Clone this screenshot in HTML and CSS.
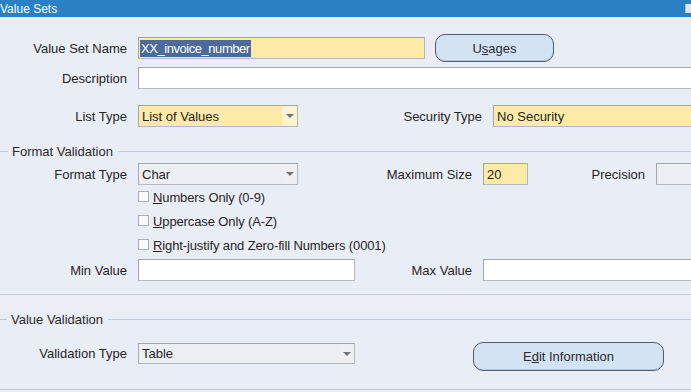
FILE: index.html
```html
<!DOCTYPE html>
<html>
<head>
<meta charset="utf-8">
<link rel="stylesheet" href="styles.css">
</head>
<body>
<div class="window">
  <div class="titlebar">
    <span class="title">Value Sets</span>
    <span class="title-icon"></span>
  </div>

  <div class="row row1">
    <label class="lbl w-main">Value Set Name</label>
    <div class="field yellow w-name"><span class="sel">XX_invoice_number</span></div>
    <button class="btn btn-usages">U<u>s</u>ages</button>
  </div>

  <div class="row row2">
    <label class="lbl w-main">Description</label>
    <div class="field white w-desc"></div>
  </div>

  <div class="row row3">
    <label class="lbl w-main">List Type</label>
    <div class="field yellow select w-160"><span class="val">List of Values</span><span class="drop"><span class="arrow"></span></span></div>
    <label class="lbl w-sec">Security Type</label>
    <div class="field yellow w-rest"><span class="val">No Security</span></div>
  </div>

  <div class="group group-format">
    <div class="legend"><span class="lline"></span><span class="ltext">Format Validation</span><span class="rline"></span></div>

    <div class="row row-ft">
      <label class="lbl w-main">Format Type</label>
      <div class="field grey select w-160"><span class="val">Char</span><span class="drop"><span class="arrow"></span></span></div>
      <label class="lbl w-max">Maximum Size</label>
      <div class="field yellow w-size"><span class="val">20</span></div>
      <label class="lbl w-prec">Precision</label>
      <div class="field grey w-rest"></div>
    </div>

    <div class="checks">
      <div class="check"><span class="box"></span><span><u>N</u>umbers Only (0-9)</span></div>
      <div class="check"><span class="box"></span><span><u>U</u>ppercase Only (A-Z)</span></div>
      <div class="check"><span class="box"></span><span><u>R</u>ight-justify and Zero-fill Numbers (0001)</span></div>
    </div>

    <div class="row row-min">
      <label class="lbl w-main">Min Value</label>
      <div class="field white w-217"></div>
      <label class="lbl w-maxv">Max Value</label>
      <div class="field white w-rest"></div>
    </div>
  </div>

  <div class="gap-band"></div>

  <div class="group group-value">
    <div class="legend"><span class="lline lline-v"></span><span class="ltext">Value Validation</span><span class="rline"></span></div>
    <div class="row row-vt">
      <label class="lbl w-main">Validation Type</label>
      <div class="field grey select w-217"><span class="val">Table</span><span class="drop"><span class="arrow"></span></span></div>
      <button class="btn btn-edit">E<u>d</u>it Information</button>
    </div>
  </div>
</div>
</body>
</html>
```

FILE: styles.css
```css
html, body {
  margin: 0;
  padding: 0;
  background: #e9edf5;
  overflow: hidden;
}
body {
  width: 691px;
  height: 392px;
  font-family: "Liberation Sans", Arial, sans-serif;
  font-size: 13px;
  color: #262626;
}
.window {
  width: 691px;
  height: 392px;
  overflow: hidden;
}
.titlebar {
  height: 17px;
  background: #2b80c4;
  display: flex;
  align-items: center;
  justify-content: space-between;
}
.title {
  color: #ffffff;
  font-size: 12px;
  line-height: 17px;
  padding-top: 1px;
}
.title-icon {
  width: 5px;
  height: 9px;
  background: #dfe8f2;
  border-left: 1px solid #9fc0e0;
  margin-bottom: 1px;
}
.row {
  display: flex;
  align-items: center;
  white-space: nowrap;
}
.lbl {
  text-align: right;
  flex: none;
  margin-right: 11px;
}
.w-main { width: 127px; }
.w-sec { width: 184px; }
.w-max { width: 174px; }
.w-prec { width: 117px; }
.w-maxv { width: 117px; }

.field {
  flex: none;
  box-sizing: border-box;
  height: 22px;
  border: 1px solid #b4b8bf;
  border-top-color: #a2a6ad;
  border-left-color: #a2a6ad;
  display: flex;
  align-items: center;
  padding-left: 3px;
  position: relative;
}
.yellow { background: #fdeaa6; }
.white { background: #ffffff; }
.grey { background: #eceff3; }
.w-name { width: 287px; height: 22px; padding-left: 1px; }
.w-desc { width: 580px; }
.w-160 { width: 160px; }
.w-217 { width: 217px; }
.w-size { width: 45px; }
.w-rest { width: 240px; }

.sel {
  background: #4d6a9c;
  color: #ffffff;
  line-height: 17px;
  padding: 0 1px;
  letter-spacing: -0.45px;
}
.val { flex: 1; }
.select .drop {
  width: 15px;
  align-self: stretch;
  display: flex;
  align-items: center;
  justify-content: center;
}
.yellow .drop { background: #fdf3d2; }
.grey .drop { background: #eef0f4; }
.arrow {
  width: 0;
  height: 0;
  border-left: 4px solid transparent;
  border-right: 4px solid transparent;
  border-top: 4px solid #6f737a;
}

.btn {
  flex: none;
  font-family: "Liberation Sans", Arial, sans-serif;
  font-size: 13px;
  color: #2b2b2b;
  background: #d4e3f4;
  border: 1px solid #4f5d72;
  border-radius: 10px;
  padding: 0;
  box-shadow: inset 0 -1px 0 #b8c9de;
}
.btn-usages {
  width: 119px;
  height: 28px;
  margin-left: 10px;
}
.btn-edit {
  width: 191px;
  height: 29px;
  margin-left: 118px;
}

.row1 { height: 28px; margin-top: 17px; }
.row2 { height: 22px; margin-top: 5px; }
.row3 { height: 22px; margin-top: 16px; }

.group-format {
  margin-top: 17px;
  border-bottom: 1px solid #c3cbd8;
  padding-bottom: 13px;
}
.legend {
  display: flex;
  align-items: center;
  height: 14px;
  color: #2a2a2a;
}
.lline {
  width: 8px;
  height: 1px;
  background: #c3cbd8;
  margin-right: 4px;
}
.lline-v { width: 7px; }
.rline {
  flex: 1;
  height: 1px;
  background: #c3cbd8;
  margin-left: 5px;
}
.row-ft { height: 22px; margin-top: 5px; }

.checks {
  display: flex;
  flex-direction: column;
  padding-left: 138px;
  letter-spacing: -0.12px;
}
.check {
  height: 24px;
  display: flex;
  align-items: center;
}
.box {
  width: 9px;
  height: 9px;
  border: 1px solid #a9adb4;
  background: #f8f9fb;
  margin-right: 4px;
  margin-top: -2px;
}
.row-min { height: 22px; margin-top: 2px; }

.gap-band {
  height: 17px;
  background: #edf0f6;
}
.group-value {
  border-bottom: 1px solid #c3cbd8;
  padding-bottom: 18px;
}
.row-vt {
  height: 29px;
  margin-top: 16px;
  align-items: flex-start;
}
.row-vt .lbl { line-height: 24px; }
.row-vt .field { margin-top: 1px; height: 21px; }
```
